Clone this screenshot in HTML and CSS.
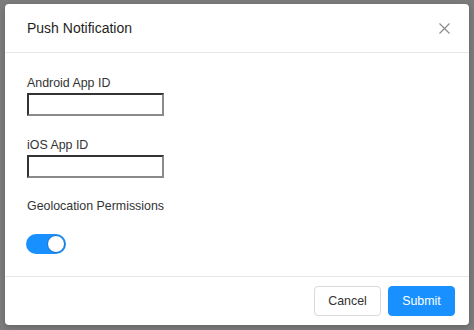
FILE: index.html
```html
<!DOCTYPE html>
<html lang="en">
<head>
    <meta charset="UTF-8">
    <meta name="viewport" content="width=device-width, initial-scale=1.0">
    <title>Push Notification</title>
    <link rel="stylesheet" href="styles.css">
</head>
<body>
    <div class="modal">
        <div class="modal-header">
            <h2>Push Notification</h2>
            <button class="close" aria-label="Close">
                <svg width="11" height="11" viewBox="0 0 11 11">
                    <path d="M0.5 0.5 L10.5 10.5 M10.5 0.5 L0.5 10.5" stroke="#8c8c8c" stroke-width="1.2" fill="none"/>
                </svg>
            </button>
        </div>
        <div class="modal-body">
            <div class="field">
                <label for="android">Android App ID</label>
                <input type="text" id="android">
            </div>
            <div class="field">
                <label for="ios">iOS App ID</label>
                <input type="text" id="ios">
            </div>
            <div class="field">
                <label>Geolocation Permissions</label>
                <div class="switch on"><span class="knob"></span></div>
            </div>
        </div>
        <div class="modal-footer">
            <button class="btn">Cancel</button>
            <button class="btn primary">Submit</button>
        </div>
    </div>
</body>
</html>
```

FILE: styles.css
```css
* {
    margin: 0;
    padding: 0;
    box-sizing: border-box;
    font-family: "Liberation Sans", Arial, sans-serif;
}
body {
    background: #7c7c7c;
    padding: 4px 5px 5px;
    height: 330px;
}
.modal {
    background: #fff;
    border-radius: 4px;
    height: 321px;
    display: flex;
    flex-direction: column;
    box-shadow: 0 2px 6px rgba(0, 0, 0, 0.2);
}
.modal-header {
    display: flex;
    justify-content: space-between;
    align-items: center;
    padding: 14px 19px 14px 22px;
    border-bottom: 1px solid #e8e8e8;
}
.modal-header h2 {
    font-size: 14px;
    line-height: 20px;
    font-weight: normal;
    color: #1f1f1f;
}
.close {
    border: none;
    background: none;
    width: 11px;
    height: 11px;
    display: flex;
    cursor: pointer;
}
.modal-body {
    flex: 1;
    padding: 23px 22px 0;
}
.field {
    margin-bottom: 21.5px;
}
.field:last-child {
    margin-bottom: 0;
}
.field label {
    display: block;
    font-size: 12.4px;
    line-height: 15px;
    color: #333;
    margin-bottom: 2px;
}
.field input {
    display: block;
    width: 137px;
    height: 23px;
    border: 2px solid;
    border-color: #333 #8a8a8a #8a8a8a #333;
    margin-left: -0.5px;
    font-size: 12px;
    padding: 0 3px;
}
.switch {
    margin-top: 20px;
    margin-left: -1px;
    width: 40px;
    height: 20px;
    border-radius: 10px;
    background: #bfbfbf;
    display: flex;
    align-items: center;
    padding: 0 1px;
}
.switch.on {
    background: #1890ff;
    justify-content: flex-end;
}
.knob {
    width: 18px;
    height: 18px;
    border-radius: 50%;
    background: #fff;
    border: 1px solid #1570d0;
}
.modal-footer {
    display: flex;
    justify-content: flex-end;
    gap: 7px;
    padding: 9px 14px 9px;
    border-top: 1px solid #e8e8e8;
}
.btn {
    width: 67px;
    height: 30px;
    font-size: 12.4px;
    border-radius: 4px;
    border: 1px solid #d9d9d9;
    background: #fff;
    color: #333;
    cursor: pointer;
}
.btn.primary {
    background: #1890ff;
    border-color: #1890ff;
    color: #fff;
}
```
